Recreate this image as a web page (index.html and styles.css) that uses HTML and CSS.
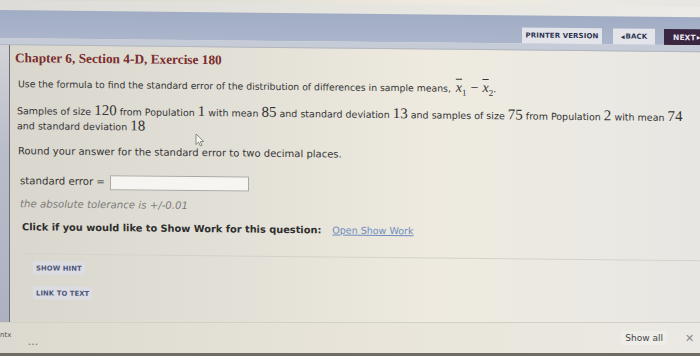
FILE: index.html
```html
<!DOCTYPE html>
<html lang="en">
<head>
<meta charset="utf-8">
<title>Chapter 6, Section 4-D, Exercise 180</title>
<link rel="stylesheet" href="styles.css">
</head>
<body>
<div class="screen">
  <div class="page">
    <div class="topstrip"></div>
    <header class="toolbar">
      <span class="tb-btn printer">PRINTER VERSION</span>
      <span class="tb-btn back"><span class="tri">&#9664;</span>BACK</span>
      <span class="tb-btn next">NEXT <span class="tri">&#9654;</span></span>
    </header>
    <div class="band"></div>
    <div class="body">
      <div class="side"></div>
      <main class="panel">
        <h1 class="title">Chapter 6, Section 4-D, Exercise 180</h1>
        <p class="q1">Use the formula to find the standard error of the distribution of differences in sample means, <span class="math"><span class="xbar">x</span><sub>1</sub><span class="minus">&minus;</span><span class="xbar">x</span><sub>2</sub></span>.</p>
        <p class="q2">Samples of size <span class="n">120</span> from Population <span class="n">1</span> with mean <span class="n">85</span> and standard deviation <span class="n">13</span> and samples of size <span class="n">75</span> from Population <span class="n">2</span> with mean <span class="n">74</span><br>and standard deviation <span class="n">18</span></p>
        <p class="q3">Round your answer for the standard error to two decimal places.</p>
        <div class="answer"><span class="label">standard error =</span><span class="input"></span></div>
        <p class="tol">the absolute tolerance is +/-0.01</p>
        <p class="work"><b>Click if you would like to Show Work for this question:</b><a class="link">Open Show Work</a></p>
        <div class="rule"></div>
        <div class="btn-row"><span class="small-btn">SHOW HINT</span></div>
        <div class="btn-row second"><span class="small-btn">LINK TO TEXT</span></div>
      </main>
    </div>
  </div>
  <footer class="downloads">
    <div class="dl-left"><span class="file">ntx</span><span class="dots">&bull;&bull;&bull;</span></div>
    <span class="showall">Show all</span>
    <span class="close">&#x2715;</span>
  </footer>
  <svg class="cursor" width="10" height="14" viewBox="0 0 10 14"><path d="M1 1 L1 11.5 L3.6 9.2 L5.4 13 L7 12.3 L5.3 8.6 L8.8 8.5 Z" fill="#f6f5f0" stroke="#7d7c78" stroke-width="0.9" stroke-linejoin="round"/></svg>
</div>
</body>
</html>
```
FILE: styles.css
```css
* { box-sizing: border-box; }
html, body { margin: 0; padding: 0; }
body { width: 700px; height: 356px; overflow: hidden; background: #e4e1d8; }

.screen {
  position: relative;
  width: 700px;
  height: 356px;
  overflow: hidden;
  display: flex;
  flex-direction: column;
  background: linear-gradient(90deg, #d9d6ce 0%, #e3e0d7 35%, #eeeadf 62%, #ebe9e3 85%, #e7e6e2 100%);
  font-family: "DejaVu Sans", Verdana, sans-serif;
  color: #363636;
}

.page {
  height: 322px;
  display: flex;
  flex-direction: column;
  transform: skewY(0.6deg);
  transform-origin: 0 0;
}

.topstrip {
  height: 10px;
  background: linear-gradient(90deg, #dedcd8, #e8e6e1 60%, #ecebe7);
}

.toolbar {
  height: 28px;
  background: linear-gradient(180deg, #a1adc5, #abb5cb);
  display: flex;
  justify-content: flex-end;
  align-items: flex-start;
  padding-top: 12px;
  gap: 9px;
  margin-right: -20px;
}

.tb-btn {
  height: 16px;
  display: flex;
  align-items: center;
  justify-content: center;
  font-size: 7px;
  font-weight: bold;
  color: #2f3550;
  background: #e2e4ea;
  letter-spacing: 0.1px;
}
.printer { width: 80px; margin-right: 2px; }
.back { width: 42px; }
.back .tri { font-size: 5px; margin-right: 1px; }
.next {
  width: 56px;
  justify-content: flex-start;
  padding-left: 9px;
  background: #3b2642;
  color: #e8e4ee;
  font-size: 7.5px;
}
.next .tri { font-size: 5px; margin-left: 1px; }

.band {
  height: 7px;
  background: #c6ccd7;
  border-bottom: 1px solid #b3b6bd;
}

.body {
  flex: 1;
  display: flex;
}

.side {
  width: 10px;
  background: linear-gradient(180deg, #d2d3d8, #b9bcc9 40%, #aeb1c0);
  border-right: 1px solid #6c6e77;
}

.panel {
  flex: 1;
  padding: 6px 0 0 8px;
  font-size: 9.3px;
  line-height: 14px;
}

.panel p { margin: 0; white-space: nowrap; }

.title {
  margin: 0 0 0 -3px;
  font-family: "Liberation Serif", "Times New Roman", serif;
  font-size: 13.3px;
  line-height: 14px;
  font-weight: bold;
  color: #7a2c2c;
}

.q1 { margin-top: 12px !important; }
.q2 { margin-top: 12px !important; margin-left: -1px !important; font-size: 9.5px; line-height: 15px; }
.q3 { margin-top: 11px !important; font-size: 10px; }

.n {
  font-family: "Liberation Serif", "Times New Roman", serif;
  font-size: 15px;
  line-height: 10px;
  color: #333;
}

.math {
  font-family: "Liberation Serif", "Times New Roman", serif;
  font-size: 14px;
  line-height: 10px;
  margin-left: 2px;
}
.xbar {
  font-style: italic;
  text-decoration: overline;
}
.math sub { font-size: 9px; line-height: 0; }
.minus { margin: 0 4px; }

.answer {
  margin-top: 15px;
  display: flex;
  align-items: center;
  height: 16px;
  margin-left: 2px;
  font-size: 10.2px;
}
.label { margin-right: 5px; }
.input {
  width: 139px;
  height: 15px;
  background: #f6f5f1;
  border: 1px solid #a9a9a6;
}

.tol {
  margin-top: 8px !important;
  margin-left: 2px !important;
  font-style: italic;
  color: #7c7c7a;
  font-size: 10.2px;
}

.work {
  margin-top: 9px !important;
  margin-left: 4px !important;
  color: #2e2e2e;
}
.work b { font-weight: bold; font-size: 9.8px; }
.link {
  margin-left: 11px;
  color: #6d8cbd;
  text-decoration: underline;
  font-size: 9.5px;
}

.rule {
  margin-top: 19px;
  height: 1px;
  background: #d4d2cb;
  margin-left: 4px;
}

.btn-row { margin-top: 7px; margin-left: 15px; display: flex; }
.btn-row.second { margin-top: 12px; }
.small-btn {
  display: inline-flex;
  align-items: center;
  height: 13px;
  padding: 0 3px;
  background: #dcdde2;
  color: #4c5578;
  font-size: 6.8px;
  font-weight: bold;
  letter-spacing: 0.1px;
}

.downloads {
  position: relative;
  z-index: 1;
  flex: 1;
  display: flex;
  align-items: center;
  background: linear-gradient(90deg, #dcd9d0, #e9e5da 55%, #ebe9e3);
  border-top: 1px solid #d3d0c7;
  border-bottom: 3px solid #6f6c66;
  padding-right: 6px;
}
.dl-left {
  flex: 1;
  display: flex;
  flex-direction: column;
  font-size: 7px;
  color: #555;
  line-height: 9px;
}
.file { margin-top: 4px; }
.dots { margin-left: 28px; font-size: 5px; color: #666; letter-spacing: 0.5px; margin-top: 0; }
.showall {
  font-size: 9px;
  color: #444;
  margin-right: 18px;
  padding: 2px 4px;
  background: #eeede8;
}
.close {
  font-size: 11px;
  color: #888;
  font-weight: 300;
}

.cursor {
  position: absolute;
  left: 195px;
  top: 133px;
}
```
